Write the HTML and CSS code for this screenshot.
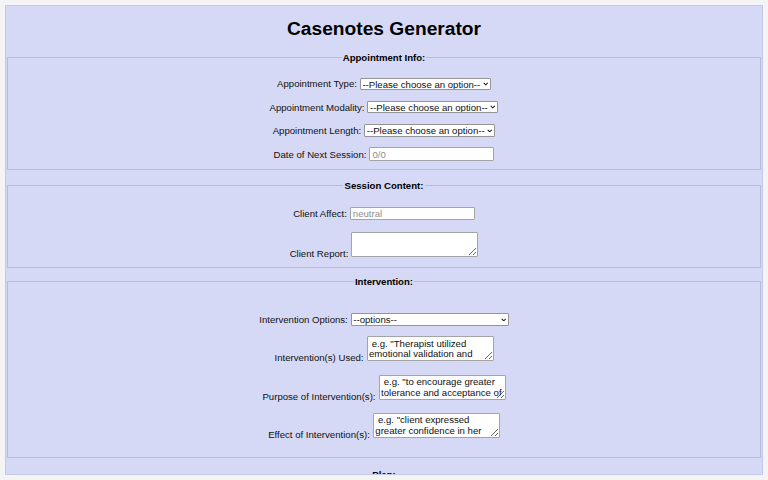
FILE: index.html
```html
<!DOCTYPE html>
<html lang="en">
<head>
<meta charset="utf-8">
<title>Casenotes Generator</title>
<link rel="stylesheet" href="styles.css">
</head>
<body>
<div class="page">
  <h1 class="title">Casenotes Generator</h1>

  <fieldset class="group group-appt">
    <legend class="group-title">Appointment Info:</legend>
    <div class="row">
      <label class="field-label" for="appt-type">Appointment Type:</label>
      <span class="select-wrap select-appt">
        <select class="select" id="appt-type"><option>--Please choose an option--</option></select>
        <svg class="select-arrow" viewBox="0 0 8 5" aria-hidden="true"><path d="M1 1l3 3 3-3" fill="none" stroke="#1a1a1a" stroke-width="1.5"/></svg>
      </span>
    </div>
    <div class="row">
      <label class="field-label" for="appt-modality">Appointment Modality:</label>
      <span class="select-wrap select-appt">
        <select class="select" id="appt-modality"><option>--Please choose an option--</option></select>
        <svg class="select-arrow" viewBox="0 0 8 5" aria-hidden="true"><path d="M1 1l3 3 3-3" fill="none" stroke="#1a1a1a" stroke-width="1.5"/></svg>
      </span>
    </div>
    <div class="row">
      <label class="field-label" for="appt-length">Appointment Length:</label>
      <span class="select-wrap select-appt">
        <select class="select" id="appt-length"><option>--Please choose an option--</option></select>
        <svg class="select-arrow" viewBox="0 0 8 5" aria-hidden="true"><path d="M1 1l3 3 3-3" fill="none" stroke="#1a1a1a" stroke-width="1.5"/></svg>
      </span>
    </div>
    <div class="row">
      <label class="field-label" for="next-date">Date of Next Session:</label>
      <input class="text-input text-input-date" id="next-date" type="text" placeholder="0/0">
    </div>
  </fieldset>

  <fieldset class="group group-session">
    <legend class="group-title">Session Content:</legend>
    <div class="row">
      <label class="field-label" for="affect">Client Affect:</label>
      <input class="text-input" id="affect" type="text" placeholder="neutral">
    </div>
    <div class="row row-tall">
      <label class="field-label" for="report">Client Report:</label>
      <textarea class="note" id="report"></textarea>
    </div>
  </fieldset>

  <fieldset class="group group-intervention">
    <legend class="group-title">Intervention:</legend>
    <div class="row">
      <label class="field-label" for="int-options">Intervention Options:</label>
      <span class="select-wrap select-options">
        <select class="select" id="int-options"><option>--options--</option></select>
        <svg class="select-arrow" viewBox="0 0 8 5" aria-hidden="true"><path d="M1 1l3 3 3-3" fill="none" stroke="#1a1a1a" stroke-width="1.5"/></svg>
      </span>
    </div>
    <div class="row row-tall">
      <label class="field-label" for="int-used">Intervention(s) Used:</label>
      <textarea class="note" id="int-used"> e.g. "Therapist utilized emotional validation and reflective listening to..."</textarea>
    </div>
    <div class="row row-tall">
      <label class="field-label" for="int-purpose">Purpose of Intervention(s):</label>
      <textarea class="note" id="int-purpose"> e.g. "to encourage greater tolerance and acceptance of difficult emotions"</textarea>
    </div>
    <div class="row row-tall">
      <label class="field-label" for="int-effect">Effect of Intervention(s):</label>
      <textarea class="note" id="int-effect"> e.g. "client expressed greater confidence in her ability to cope"</textarea>
    </div>
  </fieldset>

  <fieldset class="group group-plan">
    <legend class="group-title">Plan:</legend>
  </fieldset>
</div>
</body>
</html>
```
FILE: styles.css
```css
html {
  background: #f4f4f7;
}

body {
  margin: 4.8px;
  background: #f4f4f7;
  color: #111;
  font-family: "Liberation Sans", Arial, sans-serif;
}

.page {
  box-sizing: border-box;
  height: calc(100vh - 9.6px);
  overflow: hidden;
  background: #d5d9f6;
  border: 1px solid #c6c9e6;
}

.title {
  margin: 12px 0;
  font-size: 19.2px;
  line-height: 22px;
  font-weight: bold;
  text-align: center;
  color: #000;
}

.group {
  margin: 0 1.2px;
  border: 1px solid #b8bcdb;
  min-width: 0;
}

.group + .group {
  margin-top: 10.3px;
}

.group-appt {
  padding: 14.8px 8px 7.5px;
}

.group-session {
  padding: 15.8px 8px 10px;
}

.group + .group-intervention {
  margin-top: 8.8px;
}

.group-intervention {
  padding: 25.6px 8px 19px;
}

.group-plan {
  padding: 15.5px 8px 40px;
}

.group-title {
  margin: 0 auto;
  padding: 0 1.2px;
  font-size: 9.6px;
  line-height: 11px;
  font-weight: bold;
  color: #000;
}

.row {
  display: flex;
  justify-content: center;
  align-items: center;
  gap: 3px;
  font-size: 9.6px;
}

.row + .row {
  margin-top: 10.3px;
}

.row + .row-tall {
  margin-top: 11.8px;
}

.group-intervention .row + .row-tall {
  margin-top: 10.6px;
}

.row-tall + .row-tall,
.group-intervention .row-tall + .row-tall {
  margin-top: 13.4px;
}

.row-tall {
  align-items: flex-end;
}

.field-label {
  line-height: 11px;
  white-space: nowrap;
  color: #111;
}

.row-tall .field-label {
  margin-bottom: -2px;
}

.select-wrap {
  position: relative;
  display: inline-flex;
}

.select-appt {
  width: 131px;
}

.select-options {
  width: 158px;
}

.select {
  box-sizing: border-box;
  width: 100%;
  height: 12.8px;
  margin: 0;
  padding: 0 9px 0 1.5px;
  font: 9.6px/11px "Liberation Sans", Arial, sans-serif;
  color: #111;
  background: #fff;
  border: 1px solid #949494;
  border-radius: 1px;
  appearance: none;
  -webkit-appearance: none;
}

.select-arrow {
  position: absolute;
  right: 2.5px;
  top: 50%;
  width: 5.5px;
  height: 3.6px;
  margin-top: -1.6px;
  pointer-events: none;
}

.text-input {
  box-sizing: border-box;
  width: 125px;
  height: 13px;
  margin: 0;
  padding: 0 2px;
  font: 9.6px "Liberation Sans", Arial, sans-serif;
  color: #111;
  background: #fff;
  border: 1px solid #a4a4a4;
  border-radius: 1px;
}

.text-input-date {
  height: 14.4px;
}

.text-input::placeholder {
  color: #8e8e8e;
}

.note {
  box-sizing: border-box;
  width: 127px;
  height: 25px;
  margin: 0;
  padding: 1.2px 1.5px;
  font: 9.6px/10.6px "Liberation Sans", Arial, sans-serif;
  color: #111;
  background: #fff;
  border: 1px solid #a4a4a4;
  border-radius: 1px;
  overflow: hidden;
  resize: both;
}
```
